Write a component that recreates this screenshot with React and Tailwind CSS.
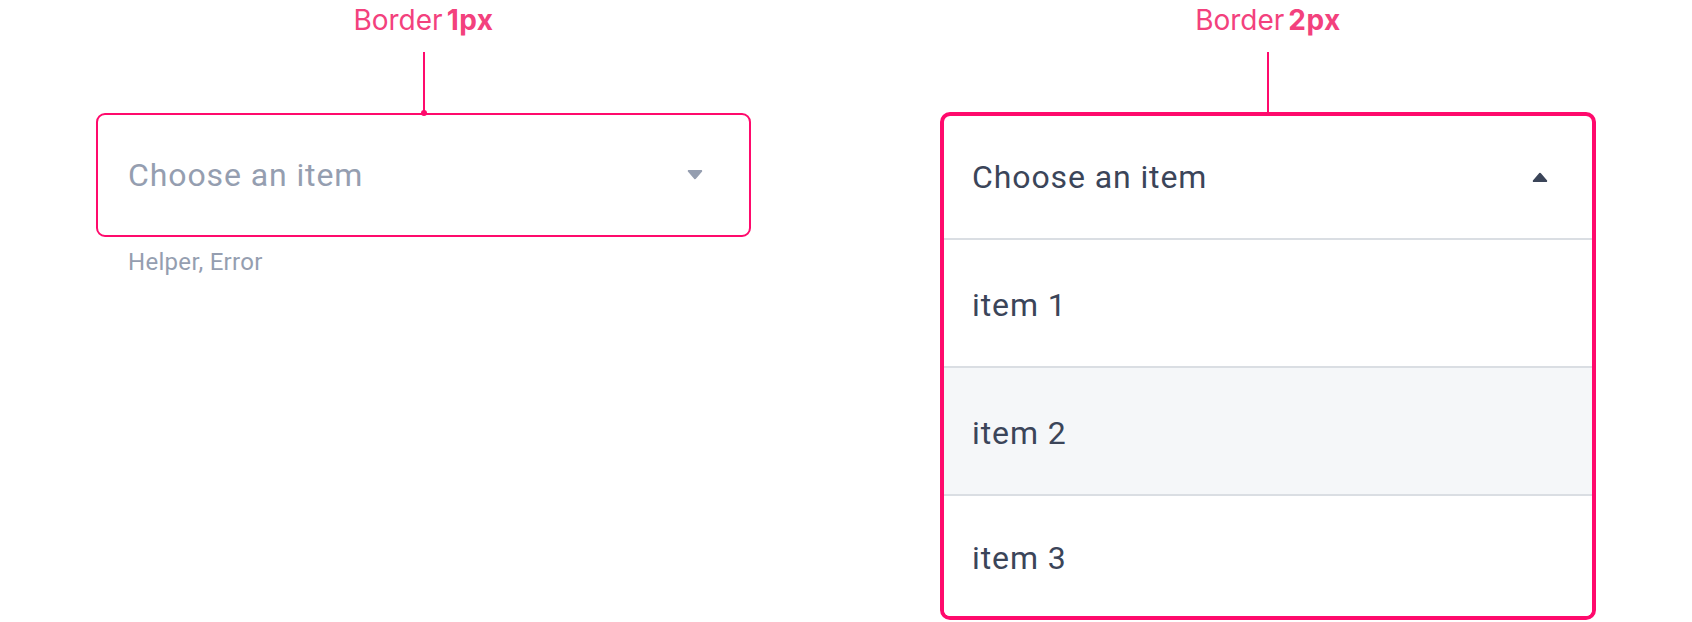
import React from "react";

const Caret = ({ up = false, color }) => (
  <svg width="16" height="10" viewBox="0 0 16 10" className="shrink-0">
    <polygon
      points={up ? "2,9 14,9 8,2" : "2,1 14,1 8,8"}
      fill={color}
      stroke={color}
      strokeWidth="2.4"
      strokeLinejoin="round"
    />
  </svg>
);

const Callout = ({ width, lineH, dot }) => (
  <div className="flex flex-col items-center">
    <div
      className="pt-[4px] h-[37px] leading-[32px] text-[28px] text-[#f3417d] whitespace-nowrap"
      style={{ fontFamily: "Inter, 'Liberation Sans', sans-serif" }}
    >
      <span className="font-normal">Border</span>
      <span className="font-bold ml-[4px] tracking-[0.5px]">{width}</span>
    </div>
    <div className={`mt-[15px] w-[2px] bg-[#ff0a6c] relative ${lineH}`}>
      {dot && <div className="absolute left-1/2 -bottom-[3px] -translate-x-1/2 w-[6px] h-[6px] rounded-full bg-[#ff0a6c]" />}
    </div>
  </div>
);

export default function App() {
  const items = ["item 1", "item 2", "item 3"];
  return (
    <div
      className="w-[1692px] h-[622px] bg-white overflow-hidden flex justify-between px-[96px]"
      style={{ fontFamily: "Roboto, 'Liberation Sans', sans-serif" }}
    >
      {/* Left: closed state */}
      <div className="w-[655px] flex flex-col items-stretch">
        <Callout width="1px" lineH="h-[61px]" dot />
        <div className="h-[124px] border-2 border-[#ff0a6c] rounded-[9px] flex items-center justify-between pl-[30px] pr-[46px]">
          <span className="text-[32px] leading-[38px] tracking-[0.9px] text-[#959eb0]">Choose an item</span>
          <Caret color="#959eb0" />
        </div>
        <div className="mt-[11px] pl-[32px] text-[24px] leading-[28px] tracking-[0.3px] text-[#959eb0]">Helper, Error</div>
      </div>

      {/* Right: open state */}
      <div className="w-[656px] flex flex-col items-stretch">
        <Callout width="2px" lineH="h-[60px]" />
        <div className="border-4 border-[#ff0a6c] rounded-[10px] overflow-hidden flex flex-col">
          <div className="h-[124px] flex items-center justify-between pl-[28px] pr-[44px] border-b-2 border-[#dadee3]">
            <span className="text-[32px] leading-[38px] tracking-[0.9px] text-[#3b4559]">Choose an item</span>
            <Caret up color="#3b4559" />
          </div>
          {items.map((it, i) => (
            <div
              key={it}
              className={`flex items-center pl-[28px] pt-[3px] ${i === 1 ? "bg-[#f5f7f9]" : "bg-white"} ${
                i < items.length - 1 ? "h-[128px] border-b-2 border-[#dadee3]" : "h-[120px]"
              }`}
            >
              <span className="text-[32px] leading-[38px] tracking-[0.9px] text-[#3b4559]">{it}</span>
            </div>
          ))}
        </div>
      </div>
    </div>
  );
}
